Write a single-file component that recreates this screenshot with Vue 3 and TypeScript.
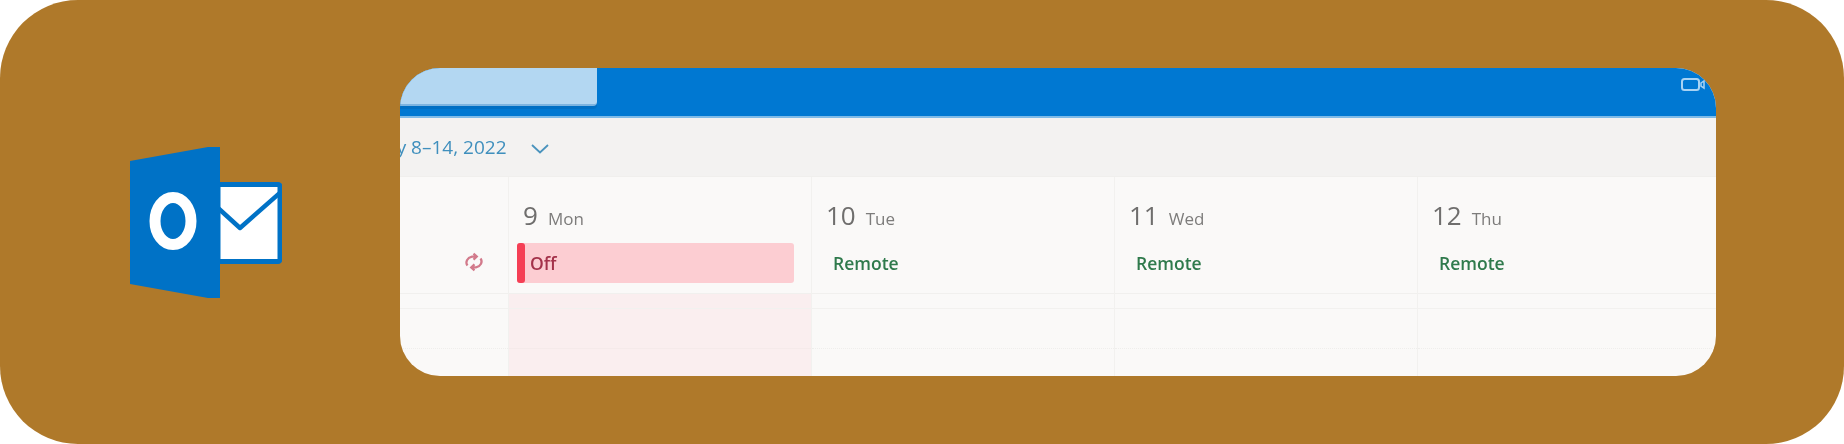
<script setup lang="ts">
interface Day {
  num: number;
  name: string;
  label: string;
  off: boolean;
}

const days: Day[] = [
  { num: 9, name: "Mon", label: "Off", off: true },
  { num: 10, name: "Tue", label: "Remote", off: false },
  { num: 11, name: "Wed", label: "Remote", off: false },
  { num: 12, name: "Thu", label: "Remote", off: false },
];
</script>

<template>
  <div class="banner">
    <svg class="logo" width="152" height="151" viewBox="0 0 152 151">
      <rect x="88" y="37.5" width="62" height="77" rx="2" fill="#fff" stroke="#0072c6" stroke-width="5" />
      <path d="M88 61 L110 81 L151 45" fill="none" stroke="#0072c6" stroke-width="4.5" stroke-linejoin="round" />
      <path d="M0 14 L78 0 H90 V151 H78 L0 137 Z" fill="#0072c6" />
      <ellipse cx="43" cy="74" rx="18" ry="23.5" fill="none" stroke="#fff" stroke-width="11" />
    </svg>

    <div class="screen">
      <div class="topbar">
        <div class="tab"></div>
        <svg class="camera" width="24" height="13" viewBox="0 0 24 13">
          <rect x="1" y="1" width="17" height="11" rx="2.5" fill="none" stroke="#a9d3f3" stroke-width="2" />
          <path d="M20 5 L23 3 V10 L20 8 Z" fill="none" stroke="#a9d3f3" stroke-width="1.5" />
        </svg>
      </div>

      <div class="toolbar">
        <span class="range">May 8–14, 2022</span>
        <svg class="chevron" width="18" height="10" viewBox="0 0 18 10">
          <path d="M1 1 L9 8.5 L17 1" fill="none" stroke="#4a93bd" stroke-width="1.8" />
        </svg>
      </div>

      <div class="week">
        <div class="gutter">
          <div class="head">
            <svg class="recur" width="20" height="20" viewBox="0 0 20 20">
              <path d="M3.5 13.5 A7.5 6 0 0 1 8 4.6 H12 M9.5 1.6 L12.8 4.6 L9.5 7.6" fill="none" stroke="#d27a8b" stroke-width="2.2" />
              <path d="M16.5 6.5 A7.5 6 0 0 1 12 15.4 H8 M10.5 12.4 L7.2 15.4 L10.5 18.4" fill="none" stroke="#d27a8b" stroke-width="2.2" />
            </svg>
          </div>
          <div class="allday"></div>
          <div class="slot"></div>
        </div>

        <div v-for="day in days" :key="day.num" class="day" :class="{ off: day.off }">
          <div class="head">
            <div class="date">
              <span class="num">{{ day.num }}</span>
              <span class="name">{{ day.name }}</span>
            </div>
            <div class="event">
              <span class="bar"></span>
              <span class="label">{{ day.label }}</span>
            </div>
          </div>
          <div class="allday"></div>
          <div class="slot"></div>
        </div>
      </div>
    </div>
  </div>
</template>

<style>
body {
  background: #fff;
}
</style>

<style scoped>
.banner {
  width: 1844px;
  height: 444px;
  background: #af792a;
  border-radius: 78px;
  display: flex;
  align-items: center;
  overflow: hidden;
}

.logo {
  flex: none;
  margin-left: 130px;
  filter: blur(0.3px);
}

.screen {
  flex: none;
  width: 1316px;
  height: 308px;
  margin-left: 118px;
  border-radius: 40px;
  overflow: hidden;
  background: #faf9f8;
  font-family: "Open Sans", sans-serif;
}

.topbar {
  height: 48px;
  background: #0078d2;
  border-bottom: 2px solid #7fbbe8;
  display: flex;
  justify-content: space-between;
  align-items: flex-start;
}

.tab {
  width: 197px;
  height: 36px;
  background: #b3d7f2;
  border-bottom: 2px solid #7db4e0;
  border-radius: 0 0 4px 0;
  box-shadow: 0 3px 0 #006fc4;
  filter: blur(0.5px);
}

.camera {
  margin: 10px 11px 0 0;
  filter: blur(0.7px);
}

.toolbar {
  height: 59px;
  background: #f3f2f1;
  border-bottom: 1px solid #f0efed;
  display: flex;
  align-items: center;
  box-sizing: border-box;
}

.range {
  margin-left: -31px;
  font-size: 19px;
  color: #3f8fbd;
  white-space: nowrap;
  filter: blur(0.7px);
}

.chevron {
  margin: 3px 0 0 24px;
  filter: blur(0.5px);
}

.week {
  display: flex;
  height: 200px;
}

.gutter {
  flex: none;
  width: 108px;
}

.gutter .head {
  align-items: flex-end;
  justify-content: flex-end;
  padding: 0 24px 21px 0;
}

.recur {
  filter: blur(0.7px);
}

.day {
  flex: none;
  width: 303px;
  border-left: 1px solid #f2f1ef;
  box-sizing: border-box;
}

.head {
  height: 117px;
  border-bottom: 1px solid #f1f0ee;
  box-sizing: border-box;
  display: flex;
  flex-direction: column;
}

.date {
  display: flex;
  align-items: baseline;
  gap: 10px;
  height: 40px;
  margin: 18px 0 8px 14px;
  color: #6f6e6d;
}

.num {
  font-size: 26px;
  line-height: 40px;
  filter: blur(0.7px);
}

.name {
  font-size: 17px;
  color: #7d7c7b;
  filter: blur(0.7px);
}

.event {
  height: 40px;
  margin: 0 17px 0 8px;
  display: flex;
  align-items: center;
  border-radius: 3px;
  font-size: 17.5px;
  font-weight: 600;
  color: #2f7a4c;
}

.bar {
  width: 8px;
  height: 100%;
  border-radius: 3px;
}

.label {
  margin-left: 5px;
  filter: blur(0.6px);
}

.off .event {
  background: #fccdd2;
  color: #a4324a;
}

.off .bar {
  background: #f53f55;
}

.allday {
  height: 14px;
  border-bottom: 1px solid #f2f1ef;
}

.slot {
  height: 39px;
  border-bottom: 1px dotted #efeeec;
}

.off .allday,
.off .slot {
  background: #faeeef;
}

.off .slot {
  height: 68px;
  border-bottom: none;
  background-image: linear-gradient(#faeeef 39px, #f5eaea 39px, #f5eaea 40px, #faeeef 40px);
}
</style>
